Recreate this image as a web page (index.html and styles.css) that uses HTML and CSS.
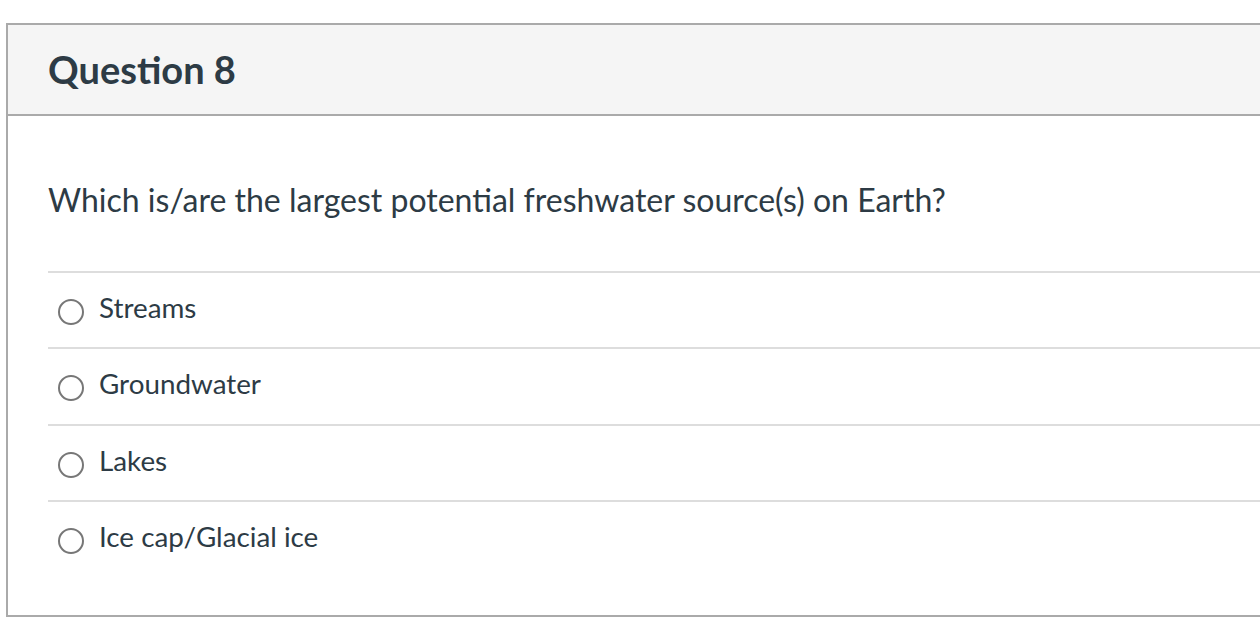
FILE: index.html
```html
<!DOCTYPE html>
<html lang="en">
<head>
<meta charset="utf-8">
<title>Question 8</title>
<link rel="stylesheet" href="styles.css">
</head>
<body>
<div class="card">
  <div class="card-header">
    <h2 class="title">Question 8</h2>
  </div>
  <div class="card-body">
    <p class="question">Which is/are the largest potential freshwater source(s) on Earth?</p>
    <div class="answers">
      <label class="answer"><span class="radio"></span><span class="answer-text">Streams</span></label>
      <label class="answer"><span class="radio"></span><span class="answer-text">Groundwater</span></label>
      <label class="answer"><span class="radio"></span><span class="answer-text">Lakes</span></label>
      <label class="answer"><span class="radio"></span><span class="answer-text">Ice cap/Glacial ice</span></label>
    </div>
  </div>
</div>
</body>
</html>
```

FILE: styles.css
```css
html, body {
  margin: 0;
  padding: 0;
  background: #ffffff;
  overflow: hidden;
}
body {
  font-family: Lato, "Open Sans", sans-serif;
  color: #2d3b45;
}
.card {
  margin: 23px 0 0 6px;
  width: 1400px;
  border: 2px solid #aaaaaa;
  box-sizing: border-box;
}
.card-header {
  height: 91px;
  box-sizing: border-box;
  background: #f5f5f5;
  border-bottom: 2px solid #aaaaaa;
  padding-left: 40px;
  padding-bottom: 2px;
  display: flex;
  align-items: center;
}
.title {
  margin: 0;
  font-size: 38px;
  font-weight: 700;
  line-height: 1;
  color: #2d3b45;
}
.card-body {
  padding: 0 0 39px 40px;
}
.question {
  margin: 0;
  padding: 65px 0 52px;
  font-size: 32px;
  line-height: 38px;
}
.answers {
  display: flex;
  flex-direction: column;
}
.answer {
  height: 76.3px;
  box-sizing: border-box;
  border-top: 2px solid #dddddd;
  display: flex;
  align-items: center;
  padding-left: 10px;
  font-size: 27.8px;
}
.radio {
  width: 26px;
  height: 26px;
  box-sizing: border-box;
  border: 2px solid #777777;
  border-radius: 50%;
  margin-right: 15px;
  margin-top: 4px;
  flex: none;
}
.answer-text {
  line-height: 32px;
  margin-bottom: 4px;
}
```
